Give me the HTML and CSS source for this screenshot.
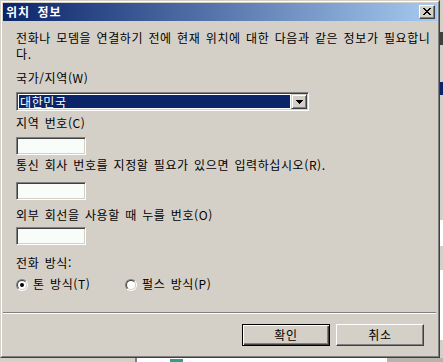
FILE: index.html
```html
<!DOCTYPE html>
<html lang="ko">
<head>
<meta charset="utf-8">
<title>위치 정보</title>
<link rel="stylesheet" href="styles.css">
</head>
<body>
<div class="desk">
  <div class="bg bg-right"></div>
  <div class="bg bg-r1"></div>
  <div class="bg bg-r2"></div>
  <div class="bg bg-r3"></div>
  <div class="bg bg-r4"></div>
  <div class="bg bg-bottom"></div>
  <div class="bg bg-b1"></div>
  <div class="bg bg-b2"></div>
  <div class="bg bg-b3"></div>
  <div class="bg bg-b4"></div>

  <div class="dialog">
    <div class="frame">
      <div class="titlebar">
        <span class="title">위치 정보</span>
        <span class="close">
          <svg width="8" height="7" viewBox="0 0 8 7" shape-rendering="crispEdges">
            <rect x="0" y="0" width="2" height="1" fill="#000"/><rect x="6" y="0" width="2" height="1" fill="#000"/>
            <rect x="1" y="1" width="2" height="1" fill="#000"/><rect x="5" y="1" width="2" height="1" fill="#000"/>
            <rect x="2" y="2" width="4" height="1" fill="#000"/>
            <rect x="3" y="3" width="2" height="1" fill="#000"/>
            <rect x="2" y="4" width="4" height="1" fill="#000"/>
            <rect x="1" y="5" width="2" height="1" fill="#000"/><rect x="5" y="5" width="2" height="1" fill="#000"/>
            <rect x="0" y="6" width="2" height="1" fill="#000"/><rect x="6" y="6" width="2" height="1" fill="#000"/>
          </svg>
        </span>
      </div>
      <div class="content">
        <p class="intro">전화나 모뎀을 연결하기 전에 현재 위치에 대한 다음과 같은 정보가 필요합니다.</p>
        <div class="label l-country">국가/지역(W)</div>
        <div class="select">
          <div class="field"><span class="sel">대한민국</span></div>
          <div class="drop">
            <svg width="7" height="4" viewBox="0 0 7 4" shape-rendering="crispEdges"><polygon points="0,0 7,0 3.5,4" fill="#000"/></svg>
          </div>
        </div>
        <div class="label l-area">지역 번호(C)</div>
        <div class="input"></div>
        <div class="label l-carrier">통신 회사 번호를 지정할 필요가 있으면 입력하십시오(R).</div>
        <div class="input i-carrier"></div>
        <div class="label l-outside">외부 회선을 사용할 때 누를 번호(O)</div>
        <div class="input i-outside"></div>
        <div class="label l-dial">전화 방식:</div>
        <div class="opts">
          <div class="opt opt-first"><span class="radio"><span class="radio-in"><span class="dot"></span></span></span><span>톤 방식(T)</span></div>
          <div class="opt"><span class="radio"><span class="radio-in"></span></span><span>펄스 방식(P)</span></div>
        </div>
      </div>
      <div class="sep"></div>
      <div class="buttons">
        <div class="btn btn-default"><span>확인</span></div>
        <div class="btn"><span>취소</span></div>
      </div>
    </div>
  </div>
</div>
</body>
</html>
```
FILE: styles.css
```css
html, body {
  margin: 0;
  padding: 0;
}
body {
  width: 443px;
  height: 362px;
  overflow: hidden;
  background: #ffffff;
  font-family: "Noto Sans CJK KR", "Noto Sans", sans-serif;
  font-size: 12px;
  color: #000;
}
.desk {
  position: relative;
  width: 443px;
  height: 362px;
}
.bg { position: absolute; }
.bg-right { left: 440px; top: 0; width: 3px; height: 362px; background: #d4d0c8; }
.bg-r1 { left: 440px; top: 32px; width: 3px; height: 13px; background: #404040; }
.bg-r2 { left: 440px; top: 82px; width: 3px; height: 13px; background: #0a246a; }
.bg-r3 { left: 440px; top: 220px; width: 3px; height: 26px; background: #ffffff; }
.bg-r4 { left: 440px; top: 270px; width: 3px; height: 70px; background: #ffffff; }
.bg-bottom { left: 0; top: 358px; width: 443px; height: 4px; background: #ffffff; }
.bg-b1 { left: 0; top: 358px; width: 135px; height: 4px; background: #d4d0c8; }
.bg-b2 { left: 135px; top: 358px; width: 2px; height: 4px; background: #808080; }
.bg-b3 { left: 170px; top: 359px; width: 13px; height: 3px; background: #3a9a8a; }
.bg-b4 { left: 387px; top: 358px; width: 56px; height: 4px; background: #b8b4ac; }

.dialog {
  position: absolute;
  left: 0;
  top: 0;
  width: 440px;
  height: 358px;
  box-sizing: border-box;
  border-style: solid;
  border-width: 1px;
  border-color: #d4d0c8 #404040 #404040 #d4d0c8;
  background: #d4d0c8;
}
.frame {
  box-sizing: border-box;
  height: 100%;
  border-style: solid;
  border-width: 1px;
  border-color: #ffffff #808080 #808080 #ffffff;
  padding: 1px;
  display: flex;
  flex-direction: column;
}
.titlebar {
  height: 18px;
  flex: none;
  display: flex;
  align-items: center;
  padding-left: 3px;
  background: linear-gradient(to right, #0a246a, #a6caf0);
}
.title {
  color: #ffffff;
  font-weight: bold;
  font-size: 12px;
  line-height: 14px;
  letter-spacing: 1px;
  word-spacing: 3px;
}
.close {
  margin-left: auto;
  margin-right: 2px;
  width: 16px;
  height: 14px;
  box-sizing: border-box;
  background: #d4d0c8;
  border-style: solid;
  border-width: 1px;
  border-color: #ffffff #404040 #404040 #ffffff;
  box-shadow: inset -1px -1px 0 #808080;
  display: flex;
  align-items: center;
  justify-content: center;
  padding: 0 1px 1px 0;
}
.close svg { display: block; }

.content {
  padding-left: 13px;
  display: flex;
  flex-direction: column;
  align-items: flex-start;
  letter-spacing: 0.6px;
  word-spacing: 1.4px;
}
.intro {
  margin: 9px 0 0 0;
  width: 418px;
  line-height: 16px;
}
.label {
  line-height: 14px;
  white-space: nowrap;
}
.l-country { margin-top: 9px; }
.l-area { margin-top: 5px; }
.l-carrier { margin-top: 3px; }
.l-outside { margin-top: 8px; }
.l-dial { margin-top: 11px; }

.select {
  margin-top: 7px;
  width: 293px;
  height: 19px;
  box-sizing: border-box;
  border-style: solid;
  border-width: 1px;
  border-color: #808080 #ffffff #ffffff #808080;
  box-shadow: inset 1px 1px 0 #404040, inset -1px -1px 0 #d4d0c8;
  padding: 1px;
  background: #ffffff;
  display: flex;
}
.field {
  flex: 1;
  padding: 1px;
  display: flex;
}
.sel {
  flex: 1;
  background: #0a246a;
  color: #ffffff;
  line-height: 13px;
  padding-left: 1px;
  white-space: nowrap;
}
.drop {
  width: 16px;
  height: 15px;
  box-sizing: border-box;
  background: #d4d0c8;
  border-style: solid;
  border-width: 1px;
  border-color: #d4d0c8 #404040 #404040 #d4d0c8;
  box-shadow: inset 1px 1px 0 #ffffff, inset -1px -1px 0 #808080;
  display: flex;
  align-items: center;
  justify-content: center;
}
.drop svg { display: block; }

.input {
  margin-top: 7px;
  width: 70px;
  height: 18px;
  box-sizing: border-box;
  border-style: solid;
  border-width: 1px;
  border-color: #808080 #ffffff #ffffff #808080;
  box-shadow: inset 1px 1px 0 #404040, inset -1px -1px 0 #d4d0c8;
  background: #f9fdf9;
}
.i-carrier { margin-top: 10px; }
.i-outside { margin-top: 5px; }

.opts {
  margin-top: 7px;
  display: flex;
  align-items: center;
  line-height: 14px;
}
.opt {
  display: flex;
  align-items: center;
  gap: 5px;
}
.opt-first { width: 109px; }
.radio {
  width: 12px;
  height: 12px;
  box-sizing: border-box;
  border-radius: 50%;
  border-style: solid;
  border-width: 1px;
  border-color: #808080 #ffffff #ffffff #808080;
  display: flex;
  margin-top: 1px;
}
.radio-in {
  flex: 1;
  border-radius: 50%;
  border-style: solid;
  border-width: 1px;
  border-color: #404040 #d4d0c8 #d4d0c8 #404040;
  background: #ffffff;
  display: flex;
  align-items: center;
  justify-content: center;
}
.dot {
  width: 4px;
  height: 4px;
  border-radius: 50%;
  background: #000;
}

.sep {
  margin-top: 21px;
  margin-right: 1px;
  height: 0;
  border-top: 1px solid #808080;
  border-bottom: 1px solid #ffffff;
}
.buttons {
  margin-top: 10px;
  padding-right: 13px;
  display: flex;
  justify-content: flex-end;
  gap: 6px;
  letter-spacing: 0.6px;
}
.btn {
  width: 88px;
  height: 22px;
  box-sizing: border-box;
  background: #d4d0c8;
  border-style: solid;
  border-width: 1px;
  border-color: #ffffff #404040 #404040 #ffffff;
  box-shadow: inset -1px -1px 0 #808080;
  display: flex;
  align-items: center;
  justify-content: center;
  line-height: 14px;
}
.btn-default {
  border-color: #000;
  box-shadow: inset 1px 1px 0 #ffffff, inset -1px -1px 0 #404040, inset -2px -2px 0 #808080;
}
```
